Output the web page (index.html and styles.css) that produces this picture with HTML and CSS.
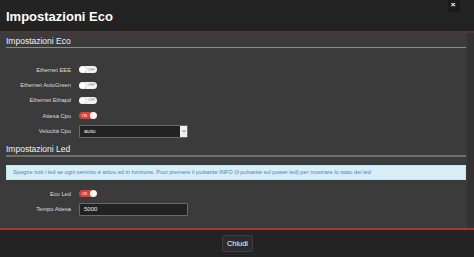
FILE: index.html
```html
<!DOCTYPE html>
<html>
<head>
<meta charset="utf-8">
<link rel="stylesheet" href="styles.css">
</head>
<body>
<div class="modal">
  <div class="header">
    <div class="title">Impostazioni Eco</div>
    <div class="close">&#215;</div>
  </div>
  <div class="content">
    <div class="section">Impostazioni Eco</div>
    <div class="rows first">
      <div class="row"><div class="label">Ethernet EEE</div><div class="toggle off"><span class="knob"></span><span class="txt">OFF</span></div></div>
      <div class="row"><div class="label">Ethernet AutoGreen</div><div class="toggle off"><span class="knob"></span><span class="txt">OFF</span></div></div>
      <div class="row"><div class="label">Ethernet Ethapd</div><div class="toggle off"><span class="knob"></span><span class="txt">OFF</span></div></div>
      <div class="row"><div class="label">Attesa Cpu</div><div class="toggle on"><span class="txt">ON</span><span class="knob"></span></div></div>
      <div class="row"><div class="label">Velocità Cpu</div><div class="select"><span class="val">auto</span><span class="arrow"><svg width="4" height="3" viewBox="0 0 4 3"><path d="M0 0.5 L4 0.5 L2 2.5 Z" fill="#999"/></svg></span></div></div>
    </div>
    <div class="section second">Impostazioni Led</div>
    <div class="info">Spegne tutti i led se ogni servizio è attivo ed in funzione. Puoi premere il pulsante INFO (il pulsante sul power led) per mostrare lo stato dei led</div>
    <div class="rows led">
      <div class="row"><div class="label">Eco Led</div><div class="toggle on"><span class="txt">ON</span><span class="knob"></span></div></div>
      <div class="row"><div class="label">Tempo Attesa</div><div class="input">5000</div></div>
    </div>
  </div>
  <div class="footer">
    <div class="btn">Chiudi</div>
  </div>
</div>
</body>
</html>
```
FILE: styles.css
```css
html, body {
  margin: 0;
  padding: 0;
  background: #222;
}
body {
  font-family: "Liberation Sans", Arial, sans-serif;
}
.modal {
  width: 474px;
  height: 257px;
  display: flex;
  flex-direction: column;
  overflow: hidden;
}
.header {
  position: relative;
  height: 31px;
  flex: none;
  background: #232323;
  border-bottom: 2px solid #4a3838;
  display: flex;
  align-items: center;
  padding-left: 6px;
}
.title {
  color: #fff;
  font-weight: bold;
  font-size: 13px;
  margin-top: 1px;
}
.close {
  position: absolute;
  top: 0;
  right: 16px;
  width: 10px;
  height: 10px;
  background: #1b1b1b;
  box-shadow: 1px 1px 2px rgba(0,0,0,0.6);
  color: #fff;
  font-size: 8px;
  line-height: 9px;
  text-align: center;
  font-weight: bold;
}
.content {
  flex: 1;
  background: #3b3b3b;
  border-right: 7px solid #323232;
  padding: 2px 1px 0 6px;
}
.section {
  color: #f2f2f2;
  font-size: 8.5px;
  line-height: 12px;
  border-bottom: 1px solid #8a8a8a;
}
.section.second {
  margin-top: 4px;
  border-bottom: 2px solid #6e6e6e;
}
.rows {
  display: flex;
  flex-direction: column;
}
.rows.first {
  margin-top: 14px;
}
.rows.led {
  margin-top: 6px;
}
.row {
  display: flex;
  align-items: center;
  height: 15.4px;
}
.label {
  width: 65px;
  text-align: right;
  color: #dcdcdc;
  font-size: 5.75px;
  margin-right: 8px;
  white-space: nowrap;
}
.toggle {
  width: 18px;
  height: 7px;
  border-radius: 4px;
  display: flex;
  align-items: center;
  box-sizing: border-box;
  overflow: hidden;
}
.toggle.off {
  background: #f2f2f2;
}
.toggle.on {
  background: #e53d35;
}
.knob {
  width: 7px;
  height: 7px;
  border-radius: 50%;
  background: #fff;
  flex: none;
}
.toggle.off .knob {
  box-shadow: 0 0 1px rgba(0,0,0,0.5);
}
.txt {
  font-size: 3.5px;
  flex: 1;
  text-align: center;
}
.toggle.off .txt {
  color: #888;
}
.toggle.on .txt {
  color: #fff;
}
.select, .input {
  width: 109px;
  height: 13px;
  box-sizing: border-box;
  background: #222;
  border: 1px solid #6a6a6a;
  border-radius: 1px;
  color: #eee;
  font-size: 6px;
  display: flex;
  align-items: center;
  padding-left: 4px;
}
.select .val {
  flex: 1;
}
.select .arrow {
  width: 7px;
  height: 11px;
  background: #f0f0f0;
  display: flex;
  align-items: center;
  justify-content: center;
}
.info {
  margin-top: 8px;
  height: 15px;
  box-sizing: border-box;
  background: #d9edf7;
  border: 1px solid #bce8f1;
  color: #4a86b0;
  font-size: 5.7px;
  line-height: 13px;
  padding-left: 6px;
  white-space: nowrap;
  overflow: hidden;
}
.footer {
  height: 27px;
  flex: none;
  background: #232323;
  border-top: 2px solid #a23a33;
  display: flex;
  justify-content: center;
  align-items: center;
}
.btn {
  width: 31px;
  height: 17px;
  box-sizing: border-box;
  background: #2c2c2c;
  border: 1px solid #3e3e3e;
  border-radius: 2px;
  color: #fff;
  font-size: 7.4px;
  display: flex;
  align-items: center;
  justify-content: center;
  margin-left: 1px;
}
```
